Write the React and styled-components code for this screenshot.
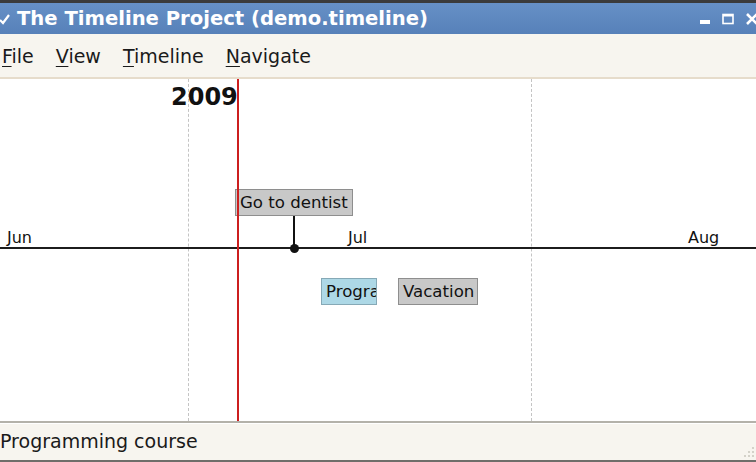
import styled, { createGlobalStyle } from "styled-components";

const GlobalStyle = createGlobalStyle`
  html, body {
    margin: 0;
    padding: 0;
    overflow: hidden;
  }
  body {
    font-family: "DejaVu Sans", "Noto Sans", sans-serif;
  }
`;

const Window = styled.div`
  width: 756px;
  height: 462px;
  display: flex;
  flex-direction: column;
  background: #f7f5ef;
  overflow: hidden;
`;

const TitleBar = styled.div`
  height: 31px;
  border-top: 3px solid #3b3b3b;
  background: linear-gradient(#6690c6, #5781b9);
  display: flex;
  align-items: center;
  color: #fff;
  font-weight: bold;
  font-size: 19.6px;
  white-space: nowrap;
`;

const TitleText = styled.div`
  flex: 1;
  margin-left: 7px;
  margin-top: -1px;
`;

const WinButtons = styled.div`
  display: flex;
  align-items: center;
  gap: 12px;
  margin-right: -2px;
`;

const MenuBar = styled.div`
  height: 43px;
  display: flex;
  align-items: center;
  gap: 22px;
  padding-left: 2px;
  font-size: 19px;
  color: #1a1a1a;
  border-bottom: 2px solid #e6dccb;
`;

const MenuItem = styled.span``;

const Mnemonic = styled.span`
  text-decoration: underline;
  text-underline-offset: 3px;
`;

const Canvas = styled.div`
  position: relative;
  flex: 1;
  background: #fff;
  overflow: hidden;
`;

const DottedLine = styled.div`
  position: absolute;
  top: 0;
  bottom: 0;
  left: ${(p) => p.x}px;
  border-left: 1px dashed #c4c4c4;
`;

const NowLine = styled.div`
  position: absolute;
  top: 0;
  bottom: 0;
  left: ${(p) => p.x}px;
  width: 1.5px;
  background: #cc1f1f;
`;

const YearLabel = styled.div`
  position: absolute;
  left: ${(p) => p.x}px;
  top: 4px;
  font-size: 24px;
  font-weight: bold;
  color: #111;
`;

const Axis = styled.div`
  position: absolute;
  left: 0;
  right: 0;
  top: ${(p) => p.y}px;
  height: 2px;
  background: #1c1c1c;
`;

const MonthLabel = styled.div`
  position: absolute;
  left: ${(p) => p.x}px;
  top: 149px;
  font-size: 16px;
  color: #111;
`;

const EventBox = styled.div`
  position: absolute;
  left: ${(p) => p.x}px;
  top: ${(p) => p.y}px;
  width: ${(p) => p.w}px;
  height: 27px;
  box-sizing: border-box;
  border: 1px solid ${(p) => (p.blue ? "#86a9b6" : "#8e8e8e")};
  background: ${(p) => (p.blue ? "#add8e6" : "#c8c8c8")};
  font-size: 16.6px;
  color: #111;
  line-height: 26px;
  padding-left: 4px;
  white-space: nowrap;
  overflow: hidden;
  text-overflow: clip;
`;

const Stem = styled.div`
  position: absolute;
  left: ${(p) => p.x}px;
  top: ${(p) => p.top}px;
  height: ${(p) => p.h}px;
  width: 2px;
  background: #111;
`;

const Dot = styled.div`
  position: absolute;
  left: ${(p) => p.x - 4}px;
  top: ${(p) => p.y - 4}px;
  width: 9px;
  height: 9px;
  border-radius: 50%;
  background: #111;
`;

const StatusBar = styled.div`
  height: 36px;
  border-top: 2px solid #b4b2aa;
  border-bottom: 2px solid #6f6e6a;
  display: flex;
  align-items: center;
  position: relative;
  font-size: 19px;
  color: #1a1a1a;
  padding-bottom: 1px;
  box-shadow: inset 0 1px 0 #fff;
`;

const Grip = styled.svg`
  position: absolute;
  right: 0;
  bottom: 1px;
`;

const Check = () => (
  <svg width="10" height="12" viewBox="0 0 10 12">
    <path d="M0 7 L3 10 L9 2" stroke="#fff" strokeWidth="2.2" fill="none" />
  </svg>
);

const MinIcon = () => (
  <svg width="10" height="12" viewBox="0 0 10 12">
    <rect x="0" y="7" width="10" height="4" fill="#fff" />
  </svg>
);

const MaxIcon = () => (
  <svg width="12" height="12" viewBox="0 0 12 12">
    <rect x="1" y="1.5" width="10" height="9" stroke="#fff" strokeWidth="1.6" fill="none" />
    <rect x="1" y="1" width="10" height="2.5" fill="#fff" />
  </svg>
);

const CloseIcon = () => (
  <svg width="12" height="12" viewBox="0 0 12 12">
    <path d="M1 1 L11 11 M11 1 L1 11" stroke="#fff" strokeWidth="2.6" />
  </svg>
);

export default function App() {
  return (
    <>
      <GlobalStyle />
      <Window>
        <TitleBar>
          <Check />
          <TitleText>The Timeline Project (demo.timeline)</TitleText>
          <WinButtons>
            <MinIcon />
            <MaxIcon />
            <CloseIcon />
          </WinButtons>
        </TitleBar>
        <MenuBar>
          <MenuItem><Mnemonic>F</Mnemonic>ile</MenuItem>
          <MenuItem><Mnemonic>V</Mnemonic>iew</MenuItem>
          <MenuItem><Mnemonic>T</Mnemonic>imeline</MenuItem>
          <MenuItem><Mnemonic>N</Mnemonic>avigate</MenuItem>
        </MenuBar>
        <Canvas>
          <DottedLine x={188} />
          <DottedLine x={531} />
          <YearLabel x={171}>2009</YearLabel>
          <Axis y={168} />
          <MonthLabel x={7}>Jun</MonthLabel>
          <MonthLabel x={348}>Jul</MonthLabel>
          <MonthLabel x={688}>Aug</MonthLabel>
          <EventBox x={235} y={110} w={118}>Go to dentist</EventBox>
          <Stem x={293} top={137} h={32} />
          <Dot x={294} y={169} />
          <EventBox x={321} y={199} w={56} blue>Programming course</EventBox>
          <EventBox x={398} y={199} w={80}>Vacation</EventBox>
          <NowLine x={237} />
        </Canvas>
        <StatusBar>
          Programming course
          <Grip width="14" height="14" viewBox="0 0 14 14">
            {[[11, 3], [7, 7], [11, 7], [3, 11], [7, 11], [11, 11]].map(([cx, cy], i) => (
              <circle key={i} cx={cx} cy={cy} r="1" fill="#c9c6bc" />
            ))}
          </Grip>
        </StatusBar>
      </Window>
    </>
  );
}
